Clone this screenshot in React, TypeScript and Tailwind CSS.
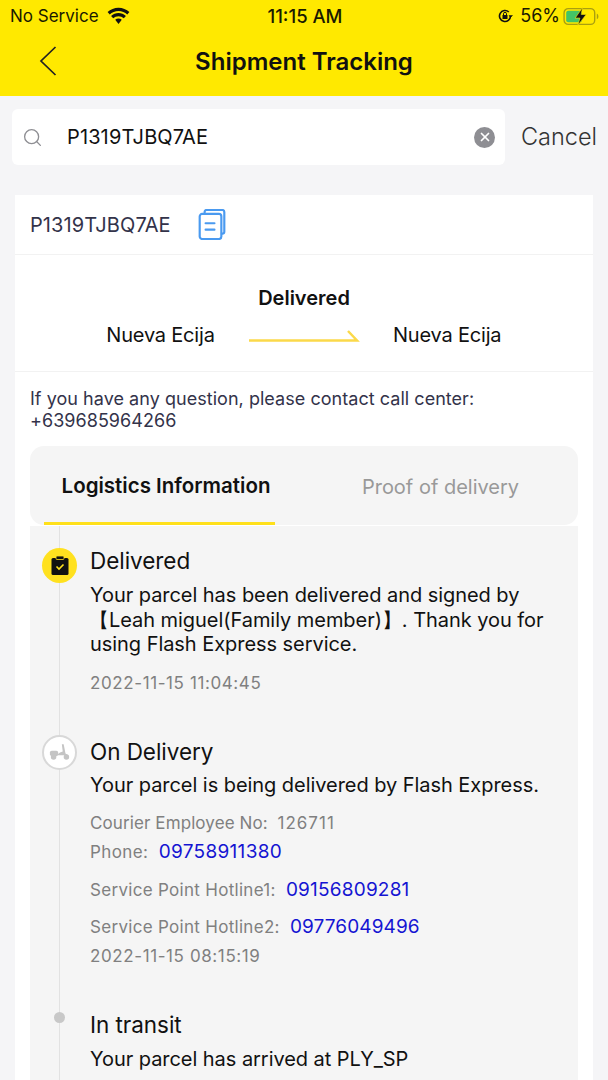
import { Search, X } from "lucide-react";

const StatusBar = () => (
    <div className="flex h-[32px] items-center justify-between pl-[10px] pr-[8px] text-[17px] leading-[32px] text-[#1a1a00]">
        <div className="flex w-[200px] items-center gap-[7px]">
            <span>No Service</span>
            <svg width="25" height="18" viewBox="0 0 22 16" fill="#111">
                <path d="M11 3.600c3 0 5.700 1.100 7.800 3l1.900-2.100C18.100 2 14.700.6 11 .6S3.900 2 1.300 4.500l1.900 2.100c2.100-1.900 4.800-3 7.800-3z" />
                <path d="M11 8.200c1.800 0 3.400.7 4.700 1.800l1.900-2.100C15.800 6.300 13.500 5.300 11 5.300S6.200 6.300 4.400 7.900L6.300 10c1.300-1.100 2.900-1.800 4.700-1.800z" />
                <path d="M11 10.200c-1.100 0-2.100.4-2.900 1.100L11 15l2.900-3.700c-.8-.7-1.800-1.100-2.900-1.100z" />
            </svg>
        </div>
        <span className="text-[18.500px] font-medium">11:15 AM</span>
        <div className="flex w-[200px] items-center justify-end text-[18px]">
            <svg width="18" height="18" viewBox="0 0 18 18" fill="none" stroke="#111" strokeWidth="1.6" className="mr-[6px]">
                <path d="M14.500 9a5.500 5.500 0 1 1-1.700-4" />
                <path d="M16.500 8.500l-2 2-1.500-2z" fill="#111" strokeWidth="0.5" />
                <rect x="6.500" y="8" width="5" height="4" fill="#111" stroke="none" />
                <path d="M7.500 8V6.800a1.500 1.500 0 0 1 3 0V8" strokeWidth="1" />
            </svg>
            <span>56%</span>
            <svg width="37" height="19" viewBox="0 0 35 18" className="ml-[3px]">
                <rect x="1" y="1.500" width="29" height="15" rx="4" fill="none" stroke="#a99f10" strokeWidth="1.300" />
                <rect x="3" y="3.500" width="15" height="11" rx="2" fill="#43c466" />
                <path d="M32 6.500v5c1-.3 1.500-1.300 1.500-2.500s-.5-2.200-1.500-2.500z" fill="#a99f10" />
                <path d="M18.500 0.500l-7 10h4.500l-2 7 8-10.500h-4.800z" fill="#111" stroke="#ffe900" strokeWidth="0.600" />
            </svg>
        </div>
    </div>
);

const App = () => {
    return (
        <div className="h-[1080px] w-[608px] overflow-hidden bg-[#f5f5f7] font-['Inter',sans-serif] text-[#111]">
            <header className="h-[96px] bg-[#ffe900]">
                <StatusBar />
                <div className="relative flex h-[60px] items-center justify-center">
                    <svg width="18" height="30" viewBox="0 0 18 30" fill="none" stroke="#222" strokeWidth="1.700" className="absolute left-[39px] top-[14px]">
                        <path d="M16.500 1L2 15l14.500 14" />
                    </svg>
                    <h1 className="text-[24px] font-semibold">Shipment Tracking</h1>
                </div>
            </header>

            <div className="flex h-[99px] items-start pl-[12px] pt-[13px]">
                <div className="flex h-[56px] w-[493px] items-center rounded-[6px] bg-white pl-[10px] pr-[10px]">
                    <Search size={21} strokeWidth={1.5} className="text-[#8e8e93]" />
                    <span className="ml-[24px] flex-1 text-[20px] tracking-[0.12px] text-[#111]">P1319TJBQ7AE</span>
                    <div className="flex h-[21px] w-[21px] items-center justify-center rounded-full bg-[#8e8e93]">
                        <X size={14} strokeWidth={3} className="text-white" />
                    </div>
                </div>
                <span className="ml-[16px] mt-[12px] text-[23.500px] font-light leading-[32px] text-[#333]">Cancel</span>
            </div>

            <main className="mx-[15px] h-[885px] bg-white">
                <div className="flex h-[60px] items-center border-b border-[#f2f2f2] pl-[15px]">
                    <span className="text-[20px] tracking-[0.08px] text-[#33334a]">P1319TJBQ7AE</span>
                    <svg width="30" height="31" viewBox="1 0 27 31.500" fill="none" stroke="#4a9af0" strokeWidth="2.200" className="ml-[26px]">
                        <path d="M7 4.500V3a2 2 0 0 1 2-2h16a2 2 0 0 1 2 2v20a2 2 0 0 1-2 2h-1.500" />
                        <rect x="2" y="5" width="22" height="25.500" rx="2.500" />
                        <path d="M8 14.500h9M8 21h9" strokeLinecap="round" />
                    </svg>
                </div>

                <div className="h-[117px] border-b border-[#f2f2f2] pt-[30px]">
                    <div className="text-center text-[20px] font-semibold leading-[26px]">Delivered</div>
                    <div className="mt-[11px] flex items-center">
                        <span className="w-[291px] text-center text-[20px] leading-[26px] tracking-[-0.2px]">Nueva Ecija</span>
                        <svg width="112" height="14" viewBox="0 0 112 14" fill="none" stroke="#fbd94a" strokeWidth="2.500" className="ml-[-58px] mt-[1px]">
                            <path d="M1 11.500h108L100 2" />
                        </svg>
                        <span className="ml-[33px] text-[20px] leading-[26px] tracking-[-0.2px]">Nueva Ecija</span>
                    </div>
                </div>

                <p className="mx-[15px] mt-[16px] text-[18px] leading-[22px] tracking-[0.04px] text-[#33334a]">
                    If you have any question, please contact call center:
                    <br />
                    +639685964266
                </p>

                <div className="mx-[15px] mt-[14px] flex h-[79px] rounded-[14px] bg-[#f5f5f5]">
                    <div className="ml-[14px] flex w-[231px] items-center justify-center border-b-[3px] border-[#ffe01a] pl-[13px] pt-[4px] text-[20.500px] font-semibold">
                        Logistics Information
                    </div>
                    <div className="flex flex-1 items-center justify-center pl-[28px] pt-[3px] text-[20px] text-[#999]">
                        Proof of delivery
                    </div>
                </div>

                <div className="relative mx-[15px] mt-[1px] h-[560px] bg-[#f5f5f5] pl-[60px] text-[20px] tracking-[-0.05px]">
                    <div className="absolute bottom-0 left-[29px] top-0 w-px bg-[#e2e2e2]" />

                    <section className="relative pt-[21px]">
                        <div className="absolute left-[-48px] top-[22px] flex h-[35px] w-[35px] items-center justify-center rounded-full bg-[#ffe11f]">
                            <svg width="18" height="19" viewBox="0 0 18 19">
                                <rect x="0.500" y="2" width="17" height="17" rx="1.500" fill="#111" />
                                <rect x="5" y="0" width="8" height="3.500" rx="1" fill="#111" stroke="#ffe11f" strokeWidth="0.800" />
                                <path d="M5.500 10.500l2.500 2.500 4.500-4.500" fill="none" stroke="#ffe11f" strokeWidth="1.600" />
                            </svg>
                        </div>
                        <h2 className="text-[22.500px] leading-[28px]">Delivered</h2>
                        <p className="mt-[8px] w-[470px] text-[20px] leading-[24.500px]">
                            Your parcel has been delivered and signed by
                            <br />
                            <span className="ml-[-1px]">【Leah miguel(Family member)】. Thank you for</span>
                            <br />
                            using Flash Express service.
                        </p>
                        <p className="mt-[14px] text-[17px] leading-[24px] tracking-[0.6px] text-[#808080]">2022-11-15 11:04:45</p>
                    </section>

                    <section className="relative mt-[43px]">
                        <div className="absolute left-[-48px] top-[-3px] flex h-[35px] w-[35px] items-center justify-center rounded-full border-2 border-[#d8d8d8] bg-white">
                            <svg width="22" height="19" viewBox="0 0 24 20" fill="#c4c4c4">
                                <rect x="1" y="8" width="9" height="6" rx="2" />
                                <circle cx="5" cy="15" r="3" />
                                <circle cx="19" cy="15" r="3" />
                                <path d="M14 1h2l2 10 3 2H8l4-3 3-1z" />
                            </svg>
                        </div>
                        <h2 className="text-[22.500px] leading-[28px]">On Delivery</h2>
                        <p className="mt-[7px] text-[20px] leading-[25px]">Your parcel is being delivered by Flash Express.</p>
                        <div className="mt-[11px] text-[17px] leading-[28px] tracking-[0.1px] text-[#808080]">
                            <p>
                                Courier Employee No:&nbsp; <span className="tracking-[1px]">126711</span>
                            </p>
                            <p className="mt-[1px] tracking-[0.4px]">
                                Phone:&nbsp; <span className="text-[19px] tracking-[0.3px] text-[#1414d2]">09758911380</span>
                            </p>
                            <p className="mt-[10px] tracking-[0.3px]">
                                Service Point Hotline1:&nbsp; <span className="text-[19px] tracking-[0.2px] text-[#1414d2]">09156809281</span>
                            </p>
                            <p className="mt-[9px] tracking-[0.3px]">
                                Service Point Hotline2:&nbsp; <span className="text-[19px] tracking-[0.1px] text-[#1414d2]">09776049496</span>
                            </p>
                            <p className="mt-[1px] tracking-[0.6px]">2022-11-15 08:15:19</p>
                        </div>
                    </section>

                    <section className="relative mt-[41px]">
                        <div className="absolute left-[-36px] top-[1px] h-[11px] w-[11px] rounded-full bg-[#c8c8c8]" />
                        <h2 className="text-[22.500px] leading-[28px]">In transit</h2>
                        <p className="mt-[8px] text-[20px] leading-[25px]">Your parcel has arrived at PLY_SP</p>
                    </section>
                </div>
            </main>
        </div>
    );
};

export default App;
